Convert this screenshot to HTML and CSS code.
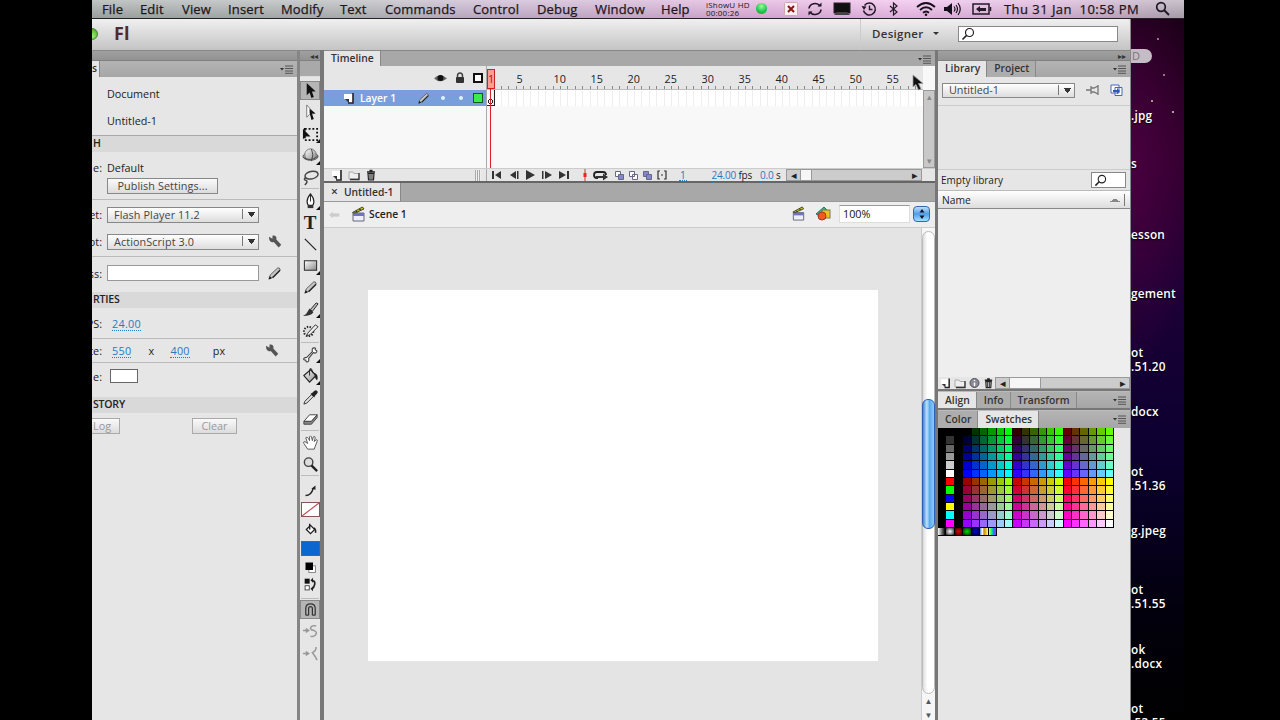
FILE: index.html
```
<!DOCTYPE html>
<html>
<head>
    <meta charset="utf-8">
    <title>Flash</title>
    <link rel="stylesheet" href="styles.css">
</head>
<body>
    <svg class="defs" width="0" height="0">
        <defs>
            <linearGradient id="metal" x1="0" y1="0" x2="1" y2="1"><stop offset="0" stop-color="#fff"/><stop offset="1" stop-color="#888"/></linearGradient>
            <symbol id="menu" viewBox="0 0 13 9"><path d="M0 3h4L2 5.5z" fill="#333"/><path d="M5 1h8M5 3.5h8M5 6h8M5 8.3h8" stroke="#555" stroke-width="1"/></symbol>
            <symbol id="lens" viewBox="0 0 14 14"><circle cx="8.5" cy="5.5" r="4" fill="none" stroke="#222" stroke-width="1.2"/><path d="M5.6 8.4L1.5 12.5" stroke="#222" stroke-width="1.6"/></symbol>
            <symbol id="wrench" viewBox="0 0 14 14"><path d="M2 2.5l3 2 .2-3C8 1 9.500 3 8.700 5.200l4.600 4.900-2.400 2.400L6.300 7.500C3.800 8.300 1.500 6 2 2.500z" fill="#555"/></symbol>
            <symbol id="pencil" viewBox="0 0 16 16"><path d="M2 14l1.500-4.500 8-7.500q2-.5 2.500 2l-8 8z" fill="url(#metal)" stroke="#555"/><path d="M2 14l1-3 2 2z" fill="#111"/><path d="M6 12.500l8-8" stroke="#222" stroke-width="1.300"/></symbol>
            <symbol id="page" viewBox="0 0 12 12"><path d="M1 2h9v9H6V7H1z" fill="#fff"/><path d="M10 1v10H5" fill="none" stroke="#222" stroke-width="1.600"/><path d="M2 7l4 4V7z" fill="#333"/></symbol>
            <symbol id="folder" viewBox="0 0 12 12"><path d="M1 3h4l1 1.500h5V10H1z" fill="#eee" stroke="#aaa"/><path d="M11 4v6.500H2" fill="none" stroke="#333" stroke-width="1.300"/></symbol>
            <symbol id="trash" viewBox="0 0 12 12"><path d="M2 3h8M4.500 1.500h3" stroke="#222" stroke-width="1.400"/><path d="M3 4.500h6L8.500 11h-5z" fill="#ccc" stroke="#222" stroke-width="1.200"/><path d="M5 5v6M7 5v6" stroke="#333"/></symbol>
            <symbol id="scene" viewBox="0 0 15 16"><path d="M2 7h11v8H2z" fill="#eef" stroke="#667"/><path d="M2 7h11v3H2z" fill="#7074b8"/><path d="M1.500 6.500L11.500 1l1.500 2-9 4z" fill="#c8c020" stroke="#443"/><path d="M4.500 5l2 1M8 3l2 1" stroke="#332"/></symbol>
        </defs>
    </svg>

    <div class="screen">
        <div class="menubar">
            <span>File</span><span>Edit</span><span>View</span><span>Insert</span><span>Modify</span><span>Text</span><span>Commands</span><span>Control</span><span>Debug</span><span>Window</span><span>Help</span>
            <div class="rec"><p>iShowU HD</p><p>00:00:26</p></div>
            <i class="led"></i>
            <svg width="14" height="14"><rect x=".5" y=".5" width="13" height="13" rx="1" fill="#f8eef4" stroke="#caa"/><path d="M4 4l6 6M10 4l-6 6" stroke="#8c1515" stroke-width="2"/></svg>
            <svg width="16" height="16"><path d="M2 7.500a6 5.500 0 0 1 11-2.500M14 8.500a6 5.500 0 0 1-11 2.500" fill="none" stroke="#201525" stroke-width="1.600"/><path d="M10.500 5.500h4V1.500zM5.500 10.500h-4v4z" fill="#201525"/></svg>
            <svg width="18" height="14"><rect x="1" y="1" width="16" height="10" fill="#111" stroke="#302030"/><path d="M1 13l3-3h10l3 3z" fill="#444"/></svg>
            <svg width="16" height="16"><path d="M3.500 4.500a6 6 0 1 1-1 5" fill="none" stroke="#241a28" stroke-width="1.500"/><path d="M.5 5l5 .5L3 9z" fill="#241a28"/><path d="M8.500 4.500V8.500h3" fill="none" stroke="#241a28" stroke-width="1.400"/></svg>
            <svg width="12" height="16"><path d="M2 5l7 6-3.500 3V2L9 5l-7 6" fill="none" stroke="#241a28" stroke-width="1.200"/></svg>
            <svg width="20" height="16"><path d="M1 6q9-8 18 0M4 9q6-5.500 12 0M7 11.700q3-2.500 6 0" fill="none" stroke="#16101a" stroke-width="1.900"/><circle cx="10" cy="13.700" r="1.300" fill="#16101a"/></svg>
            <svg width="17" height="16"><path d="M0 6h3l5-4v12l-5-4H0z" fill="#16101a"/><path d="M10 5.500q2 2.500 0 5M12 4q3 4 0 8M14 2q4.500 6 0 12" fill="none" stroke="#16101a" stroke-width="1.200"/></svg>
            <svg width="20" height="14"><rect x="1" y="2" width="16" height="10" fill="none" stroke="#241a28" stroke-width="1.500"/><path d="M18.500 5v4" stroke="#241a28" stroke-width="1.500"/><path d="M4 7l4-3v2h6v3H8v1.500z" fill="#241a28"/></svg>
            <span class="clock">Thu 31 Jan &nbsp;10:58 PM</span>
            <svg width="15" height="15"><circle cx="6" cy="6" r="4.300" fill="none" stroke="#201825" stroke-width="1.700"/><path d="M9 9l5 5" stroke="#201825" stroke-width="2"/></svg>
        </div>

        <div class="desk">
            <div class="app">
                <div class="titlebar">
                    <i class="zoom-light"></i>
                    <span class="fl">Fl</span>
                    <div class="workspace">Designer <i class="tri"></i></div>
                    <div class="search"><svg width="14" height="14"><use href="#lens"/></svg></div>
                </div>

                <div class="work">
                    <div class="props">
                        <div class="strip"></div>
                        <div class="tabs"><span class="tab stub">s</span><svg class="pm" width="13" height="9"><use href="#menu"/></svg></div>
                        <div class="doc"><p>Document</p><p>Untitled-1</p></div>
                        <h3>H</h3>
                        <div class="row r-profile"><label>e:</label><span>Default</span></div>
                        <div class="row r-publish"><label></label><button>Publish Settings...</button></div>
                        <div class="row r-target"><label>et:</label><div class="select">Flash Player 11.2<i></i></div></div>
                        <div class="row r-script"><label>ot:</label><div class="select">ActionScript 3.0<i></i></div><svg width="15" height="15"><use href="#wrench"/></svg></div>
                        <div class="row r-class"><label>ss:</label><div class="field"></div><svg width="15" height="15"><use href="#pencil"/></svg></div>
                        <h3>RTIES</h3>
                        <div class="row r-fps"><label>PS:</label><a>24.00</a></div>
                        <div class="row r-size"><label>te:</label><a>550</a><b>x</b><a>400</a><b>px</b><svg width="15" height="15"><use href="#wrench"/></svg></div>
                        <div class="row r-stage"><label>e:</label><div class="chip"></div></div>
                        <h3>STORY</h3>
                        <div class="row r-log"><button>Log</button><button>Clear</button></div>
                    </div>

                    <div class="tools">
                        <div class="strip">◂◂</div>
                        <div class="grip"></div>
                        <div class="tool on"><svg viewBox="0 0 18 18"><path d="M5 1v13l3-3 2 6 2.500-1-2-6h4z" fill="#111"/></svg></div>
                        <div class="tool"><svg viewBox="0 0 18 18"><path d="M5 1v13l3-3 5-1z" fill="#fff" stroke="#777"/><path d="M8 9l2 8 2.500-1-2-6h4L8 5z" fill="#111"/></svg></div>
                        <div class="tool more"><svg viewBox="0 0 18 18"><rect x="3" y="3" width="13" height="12" fill="none" stroke="#111" stroke-width="2" stroke-dasharray="2 2"/><path d="M1 3v11l3-3h5z" fill="#111"/></svg></div>
                        <div class="tool more"><svg viewBox="0 0 18 18"><ellipse cx="9" cy="10" rx="8" ry="4" fill="#aaa" stroke="#555"/><circle cx="9" cy="8" r="6" fill="url(#metal)" stroke="#777"/><path d="M1.500 11q7 5 15-1M10 2q3 6 0 13" fill="none" stroke="#444"/></svg></div>
                        <div class="tool"><svg viewBox="0 0 18 18"><ellipse cx="10" cy="6.500" rx="7" ry="4" fill="none" stroke="#444" stroke-width="1.500" transform="rotate(-12 10 6)"/><path d="M4 9q-3 2 0 3t-1 5" fill="none" stroke="#444" stroke-width="1.600"/></svg></div>
                        <hr>
                        <div class="tool more"><svg viewBox="0 0 18 18"><path d="M9 1q5 6 3 11l-1 1H7l-1-1Q4 7 9 1z" fill="#fff" stroke="#222" stroke-width="1.300"/><path d="M9 2v7" stroke="#222"/><rect x="6" y="13" width="6" height="3" fill="#333"/></svg></div>
                        <div class="tool"><span class="tee">T</span></div>
                        <div class="tool"><svg viewBox="0 0 18 18"><path d="M3 3l12 12" stroke="#222" stroke-width="1.300"/></svg></div>
                        <div class="tool more"><svg viewBox="0 0 18 18"><rect x="2.500" y="4" width="13" height="10" fill="url(#metal)" stroke="#222"/></svg></div>
                        <div class="tool"><svg viewBox="0 0 18 18"><use href="#pencil" x="1" y="1" width="16" height="16"/></svg></div>
                        <div class="tool more"><svg viewBox="0 0 18 18"><path d="M9 9l6-7 2 1-6 8z" fill="#bbb" stroke="#222"/><path d="M8 8l4 4q-2 4-11 4 4-2 5-5z" fill="#333"/></svg></div>
                        <div class="tool"><svg viewBox="0 0 18 18"><circle cx="7" cy="10" r="5" fill="#ddd" stroke="#222" stroke-width="2" stroke-dasharray="1.500 1.500"/><path d="M6 12l8-9 3 2-8 8-4 2z" fill="#eee" stroke="#333"/></svg></div>
                        <hr>
                        <div class="tool more"><svg viewBox="0 0 18 18"><path d="M5 12l6-6q-1-4 2-4 2 0 1 2 3 1 1 3-1 1-3 0l-5 6q1 4-2 4-1-1-1-2-3 0-2-2 1-1 3-1z" fill="#fff" stroke="#444" stroke-width="1.200"/></svg></div>
                        <div class="tool more"><svg viewBox="0 0 18 18"><path d="M2 9l7-6 6 6-7 7z" fill="url(#metal)" stroke="#222" stroke-width="1.200"/><path d="M8 9V3q0-2 2-1l2 5" fill="none" stroke="#222"/><path d="M13 6q5 2 3 8-3-2-3-8z" fill="#222"/></svg></div>
                        <div class="tool"><svg viewBox="0 0 18 18"><path d="M2 16l1-3 7-7 2 2-7 7z" fill="#ddd" stroke="#333"/><path d="M9 5l4 4 1-2q4-4 2-5-2-2-5 2z" fill="#222"/></svg></div>
                        <div class="tool"><svg viewBox="0 0 18 18"><path d="M2 11l6-7h8l-6 7z" fill="#fff" stroke="#444"/><path d="M2 11h8l6-7v3l-6 7H2z" fill="#888" stroke="#444"/></svg></div>
                        <hr>
                        <div class="tool"><svg viewBox="0 0 18 18"><path d="M6 16l-4-6q-1-2 1-2l3 2-2-6q1-2 3 1l1 2V3q1-2 2 0l1 4 1-4q2-1 2 1l-1 4 2-2q2 0 1 2l-2 5-1 3z" fill="#fff" stroke="#555"/></svg></div>
                        <div class="tool"><svg viewBox="0 0 18 18"><circle cx="7" cy="6.500" r="4.500" fill="#ddd" stroke="#444" stroke-width="1.500"/><path d="M10 10l6 6" stroke="#222" stroke-width="2.500"/></svg></div>
                        <hr>
                        <div class="tool sm"><svg viewBox="0 0 18 18"><path d="M3 15q7 0 9-8" fill="none" stroke="#222" stroke-width="1.800"/><path d="M10 7l5-4v5z" fill="#222"/></svg></div>
                        <div class="color none"><svg width="17" height="13"><path d="M0 13L17 0" stroke="#c0505a" stroke-width="1.200"/></svg></div>
                        <div class="tool bucket"><svg viewBox="0 0 18 18"><path d="M4 9l5-5 5 5-5 5z" fill="#fff" stroke="#222" stroke-width="1.500"/><path d="M8 9V2M13 7q3 2 2 6" fill="none" stroke="#222" stroke-width="1.700"/></svg></div>
                        <div class="color fill"></div>
                        <div class="tool bw"><svg viewBox="0 0 18 18"><rect x="7" y="7" width="8" height="8" fill="#fff" stroke="#777"/><rect x="3" y="3" width="9" height="9" fill="#000"/></svg></div>
                        <div class="tool swap"><svg viewBox="0 0 18 18"><rect x="2" y="2" width="6" height="6" fill="#111"/><rect x="2.500" y="10.500" width="5" height="5" fill="#fff" stroke="#333"/><path d="M11 4q4 1 3 5t-3 5" fill="none" stroke="#222" stroke-width="2"/><path d="M12 1v6L9 4zM12 11v6l-3-3z" fill="#222"/></svg></div>
                        <hr>
                        <div class="tool on"><svg viewBox="0 0 18 18"><path d="M4 15V8q0-5 5-5t5 5v7M7 15V8q0-2 2-2t2 2v7M4 15h3M11 15h3" fill="none" stroke="#333" stroke-width="1.300"/></svg></div>
                        <div class="tool"><svg viewBox="0 0 18 18"><path d="M1 8h5M4 6l3 2-3 2M15 3q-6-1-6 3 1 2 4 2 4 2 1 5-2 2-5 1" fill="none" stroke="#999" stroke-width="1.600"/></svg></div>
                        <div class="tool"><svg viewBox="0 0 18 18"><path d="M1 9h5M4 7l3 2-3 2M15 2q0 4-4 6 3 4 5 8" fill="none" stroke="#999" stroke-width="1.600"/></svg></div>
                    </div>

                    <div class="center">
                        <div class="tabs"><span class="tab">Timeline</span><svg class="pm" width="13" height="9"><use href="#menu"/></svg></div>
                        <div class="timeline">
                            <div class="layers">
                                <div class="layer-head">
                                    <svg width="13" height="11"><path d="M0 5.500Q6-1 13 5.500 6 11 0 5.500z" fill="#666"/><circle cx="6.500" cy="5" r="3" fill="#111"/></svg>
                                    <svg width="10" height="12"><path d="M2.500 6V4q0-3 2.500-3t2.500 3v2" fill="none" stroke="#444" stroke-width="1.500"/><rect x="1" y="5" width="8" height="6" rx="1" fill="#333"/></svg>
                                    <i class="box"></i>
                                </div>
                                <div class="layer">
                                    <svg width="12" height="12"><use href="#page"/></svg>
                                    <span>Layer 1</span>
                                    <svg width="13" height="13"><use href="#pencil"/></svg>
                                    <i class="dot"></i><i class="dot"></i><i class="box green"></i>
                                </div>
                            </div>
                            <div class="frames">
                                <div class="ruler"><span>1</span><span>5</span><span>10</span><span>15</span><span>20</span><span>25</span><span>30</span><span>35</span><span>40</span><span>45</span><span>50</span><span>55</span></div>
                                <div class="track"><i class="key"></i></div>
                                <i class="playhead"></i>
                            </div>
                            <div class="vbar"><span>▴</span><span>▾</span></div>
                        </div>
                        <div class="controls">
                            <div class="layer-tools"><svg width="12" height="12"><use href="#page"/></svg><svg width="12" height="12"><use href="#folder"/></svg><svg width="12" height="12"><use href="#trash"/></svg><i class="ridges"></i></div>
                            <svg width="180" height="12" fill="#333">
                                <path d="M1 2h2v8H1zM10 2v8L4 6z"/><path d="M25 2v8l-6-4zM26 2h1.500v8H26z"/><path d="M35 1v10l9-5z"/><path d="M51 2h1.500v8H51zM54 2v8l7-4z"/><path d="M68 2v8l7-4zM76 2h2v8h-2z"/>
                                <path d="M94 0v12" stroke="#d33"/><path d="M92.500 4h3v4h-3z" fill="#e22"/>
                                <path d="M107 9h-1q-3 0-3-3t3-3h6q3 0 3 3" fill="none" stroke="#222" stroke-width="1.800"/><path d="M105 7h7V4.500l5 3.500-5 3.500V9h-7z"/>
                                <g stroke="#668"><path d="M124.500 2.500h5v5h-5z" fill="#fff"/><path d="M127.500 5.500h5v5h-5z" fill="#8585d0"/><path d="M138.500 2.500h5v5h-5zM141.500 5.500h5v5h-5z" fill="#fff"/><path d="M152.500 2.500h5v5h-5z" fill="#8585d0"/><path d="M155.500 5.500h5v5h-5z" fill="#8585d0"/></g>
                                <path d="M169 2h-2v8h2M173 2h2v8h-2M170 6h2" fill="none" stroke="#333" stroke-width="1.200"/>
                            </svg>
                            <div class="stats"><a>1</a><span><a>24.00</a> fps</span><span><a>0.0</a> s</span></div>
                            <div class="hbar"><span>◂</span><i></i><span>▸</span></div>
                        </div>
                        <div class="tabs doc-tabs"><span class="tab"><small>×</small>Untitled-1</span></div>
                        <div class="scenebar">
                            <span class="back">⬅</span>
                            <svg width="15" height="16"><use href="#scene"/></svg>
                            <span class="name">Scene 1</span>
                            <svg width="15" height="15"><use href="#scene"/></svg>
                            <svg width="16" height="15"><path d="M1 8l8-7 3 3v5H3z" fill="#4a9" stroke="#275"/><rect x="7" y="4" width="8" height="8" fill="#ecc51c" stroke="#775"/><circle cx="7" cy="10" r="4" fill="#ee5a20" stroke="#a32"/></svg>
                            <div class="zoom">100%</div>
                            <div class="stepper"><svg width="8" height="12"><path d="M4 1l2.500 3.500h-5zM4 11l2.500-3.500h-5z" fill="#113"/></svg></div>
                        </div>
                        <div class="pasteboard">
                            <div class="stage"></div>
                            <div class="aqua">
                                <div class="well"><div class="thumb"></div></div>
                                <span>▲</span><span>▼</span>
                            </div>
                        </div>
                    </div>

                    <div class="right">
                        <div class="strip">▸▸</div>
                        <div class="tabs"><span class="tab">Library</span><span class="tab off">Project</span><svg class="pm" width="13" height="9"><use href="#menu"/></svg></div>
                        <div class="lib-pick">
                            <div class="select">Untitled-1<i></i></div>
                            <svg width="13" height="12"><path d="M0 6h5M5 2v8M12 1v10M5 4h3l4-2M5 8h3l4 2" fill="none" stroke="#777" stroke-width="1.300"/></svg>
                            <svg width="13" height="12"><path d="M1 1h8v8H1zM5 3.500h7v8H5z" fill="#fff" stroke="#46b"/><path d="M3 6h4V4l3 3-3 3V8H3z" fill="#35b"/></svg>
                        </div>
                        <div class="preview"></div>
                        <div class="lib-info">Empty library<div class="mini"><svg width="13" height="13"><use href="#lens"/></svg></div></div>
                        <div class="lib-head">Name<i></i></div>
                        <div class="lib-list"></div>
                        <div class="lib-foot">
                            <svg width="11" height="12"><use href="#page"/></svg><svg width="12" height="12"><use href="#folder"/></svg><svg width="11" height="12"><circle cx="5.500" cy="6" r="4.500" fill="#889" stroke="#555"/><path d="M5.500 3v1M5.500 5.500V9" stroke="#fff" stroke-width="1.500"/></svg><svg width="11" height="12"><use href="#trash"/></svg>
                            <div class="hbar"><span>◂</span><i></i><span>▸</span></div>
                        </div>
                        <div class="tabs low"><span class="tab">Align</span><span class="tab off">Info</span><span class="tab off">Transform</span><svg class="pm" width="13" height="9"><use href="#menu"/></svg></div>
                        <div class="tabs low"><span class="tab off">Color</span><span class="tab">Swatches</span><svg class="pm" width="13" height="9"><use href="#menu"/></svg></div>
                        <div class="swatches" id="swatches"></div>
                        <div class="gradients"><i></i><i></i><i></i><i></i><i></i><i></i><i></i></div>
                    </div>
                </div>
            </div>

            <div class="desktop">
                <span class="pill">D</span>
                <p class="first">.jpg</p>
                <p class="short">s</p>
                <p>esson</p>
                <p>gement</p>
                <p>ot<br>.51.20</p>
                <p>docx</p>
                <p>ot<br>.51.36</p>
                <p>g.jpeg</p>
                <p>ot<br>.51.55</p>
                <p>ok<br>.docx</p>
                <p>ot<br>.53.55</p>
            </div>
        </div>
    </div>

    <svg class="cursor" width="12" height="18"><path d="M1 1v12l3-2.500L6.500 16 9 15 6.500 9.500H11z" fill="#111" stroke="#999" stroke-width=".8"/></svg>

    <script>
        // web safe palette: 3 fixed columns, then 3 blocks of 6x6 in each half
        const box = document.getElementById('swatches');
        const grays = ['#000', '#333', '#666', '#999', '#ccc', '#fff', '#f00', '#0f0', '#00f', '#ff0', '#0ff', '#f0f'];

        function addSwatch(color) {
            const cell = document.createElement('i');
            cell.style.background = color;
            box.appendChild(cell);
        }

        for (let row = 0; row < 12; row++) {
            addSwatch('#000');
            addSwatch(grays[row]);
            addSwatch('#000');
            for (let col = 0; col < 18; col++) {
                const r = (Math.floor(col / 6) + (row > 5 ? 3 : 0)) * 51;
                const g = (col % 6) * 51;
                const b = (row % 6) * 51;
                addSwatch('rgb(' + r + ',' + g + ',' + b + ')');
            }
        }
    </script>
</body>
</html>
```
FILE: styles.css
```
* {
    margin: 0;
    padding: 0;
    box-sizing: border-box;
}

body {
    width: 1280px;
    height: 720px;
    background: #000;
    overflow: hidden;
    font-family: 'Open Sans', 'Noto Sans', sans-serif;
    font-size: 10.8px;
    color: #222;
}

svg {
    display: block;
    flex: none;
}

i {
    display: block;
    flex: none;
}

.defs {
    position: absolute;
}

.screen {
    width: 1092px;
    height: 720px;
    margin-left: 92px;
    display: flex;
    flex-direction: column;
    overflow: hidden;
}

/* menu bar */
.menubar {
    height: 19px;
    flex: none;
    display: grid;
    grid-template-columns: 38px 42px 46px 53px 59px 45px 88px 64px 58px 66px 45px 51px 27px 23px 26px 28px 27px 28px 28px 28px 32px 151px 20px;
    align-items: center;
    padding-left: 10px;
    padding-bottom: 2px;
    border-bottom: 1px solid #222;
    background: linear-gradient(rgba(255, 255, 255, 0.3), rgba(0, 0, 0, 0.08)), linear-gradient(90deg, #a5acaa, #b6b8bb 25%, #c9b5d0 36%, #d0b2d2 48%, #e3b0de 62%, #f0bdec 75%, #dcb4da 88%, #b3a8b6);
    color: #1c1620;
}

.menubar span {
    font-size: 13px;
    line-height: 16px;
    white-space: nowrap;
    letter-spacing: 0.15px;
    -webkit-text-stroke: 0.25px #1c1620;
}

.menubar .clock {
    letter-spacing: 0.45px;
}

.rec {
    padding-top: 1px;
    font-size: 8px;
    line-height: 8px;
    white-space: nowrap;
    letter-spacing: 0.2px;
}

.led {
    width: 11px;
    height: 11px;
    margin-left: -1px;
    border-radius: 50%;
    background: radial-gradient(circle at 50% 30%, #9f9, #1cc24a 60%, #2a9a4a);
}

.desk {
    flex: 1;
    display: flex;
    min-height: 0;
}

.app {
    width: 1039px;
    flex: none;
    display: flex;
    flex-direction: column;
    border-right: 1px solid #888;
    background: #e6e6e6;
}

.titlebar {
    height: 31px;
    flex: none;
    display: flex;
    align-items: center;
    overflow: hidden;
    border-top-right-radius: 5px;
    background: linear-gradient(#f0f0f0, #c4c4c4);
}

.zoom-light {
    width: 12px;
    height: 12px;
    margin-left: -6px;
    margin-top: -2px;
    border-radius: 50%;
    background: radial-gradient(circle at 50% 70%, #a6ee70, #3aa428);
    border: 1px solid #4b7c38;
}

.fl {
    margin-left: 16px;
    margin-top: -4px;
    font-size: 18px;
    font-weight: 700;
    color: #54292a;
    line-height: 24px;
}

.workspace {
    margin-left: auto;
    width: 98px;
    height: 31px;
    padding: 0 0 2px 11px;
    display: flex;
    align-items: center;
    border-left: 1px solid #ccc;
    font-size: 11.5px;
    font-weight: 600;
    letter-spacing: 0.3px;
    color: #333;
}

.tri {
    margin-left: 9px;
    border: 3px solid transparent;
    border-top-color: #333;
    border-bottom: 0;
}

.search {
    width: 160px;
    height: 16px;
    margin-right: 12px;
    margin-top: -2px;
    padding: 0 2px;
    background: #fff;
    border: 1px solid #888;
}

.work {
    flex: 1;
    display: flex;
    min-height: 0;
}

/* shared panel parts */
.strip {
    height: 11px;
    flex: none;
    padding-right: 4px;
    border-top: 1px solid #888;
    border-bottom: 1px solid #808080;
    background: linear-gradient(#a0a0a0, #929292);
    text-align: right;
    font-size: 8px;
    line-height: 9px;
    color: #333;
}

.tabs {
    height: 16px;
    flex: none;
    display: flex;
    background: linear-gradient(#b4b4b4, #a6a6a6);
}

.tab {
    padding: 0 6px 0 7px;
    line-height: 15px;
    font-weight: 600;
    font-size: 10.3px;
    border-right: 1px solid #888;
    background: #e6e6e6;
    color: #333;
}

.tab.off {
    background: #adadad;
    border-right-color: #8a8a8a;
}

.pm {
    margin: 4px 4px 0 auto;
}

.select {
    display: flex;
    align-items: center;
    height: 16px;
    padding-left: 6px;
    padding-bottom: 1px;
    border: 1px solid #888;
    background: linear-gradient(#fff, #ddd);
    color: #444;
    white-space: nowrap;
}

.select i {
    width: 16px;
    height: 10px;
    margin-left: auto;
    border-left: 1px solid #777;
    background: linear-gradient(#333, #333) 5px 3px / 7px 1px no-repeat, linear-gradient(#333, #333) 6px 4px / 5px 2px no-repeat, linear-gradient(#333, #333) 7px 6px / 3px 1px no-repeat, linear-gradient(#333, #333) 8px 7px / 1px 1px no-repeat;
}

button {
    font: inherit;
    border: 1px solid #888;
    background: linear-gradient(#fafafa, #dcdcdc);
    color: #444;
}

a {
    color: #2a7ab8;
    border-bottom: 1px dotted #2a7ab8;
    line-height: 13px;
}

/* properties panel */
.props {
    width: 205px;
    flex: none;
    overflow: hidden;
}

.stub {
    width: 8px;
    padding: 0;
    overflow: hidden;
}

.doc {
    height: 59px;
    padding: 8px 0 0 15px;
    border-bottom: 1px solid #aaa;
}

.doc p {
    height: 27px;
    line-height: 18px;
}

.props h3 {
    height: 16px;
    padding-left: 1px;
    overflow: hidden;
    line-height: 15px;
    font-size: 10.5px;
    font-weight: 600;
    letter-spacing: -0.2px;
    background: #d9d9d9;
}

.row {
    display: flex;
    align-items: center;
}

.row label {
    width: 10px;
    margin-right: 5px;
    display: flex;
    flex: none;
    justify-content: flex-end;
    overflow: hidden;
    white-space: nowrap;
}

.row .select,
.row .field {
    width: 152px;
}

.row svg {
    margin-left: 8px;
}

.r-profile {
    height: 25px;
    padding-top: 6px;
}

.r-publish {
    height: 23px;
    padding-bottom: 5px;
    border-bottom: 1px solid #bbb;
}

.r-publish button {
    width: 111px;
    height: 16px;
    line-height: 13px;
}

.r-target {
    height: 26px;
    padding-top: 3px;
    margin-bottom: 1px;
}

.r-target .select,
.r-script .select,
.r-publish button {
    letter-spacing: 0.1px;
}

.r-script {
    height: 30px;
    border-bottom: 1px solid #bbb;
}

.r-class {
    height: 35px;
    padding-bottom: 3px;
}

.field {
    height: 16px;
    border: 1px solid #999;
    background: #fff;
}

.r-fps {
    height: 31px;
    padding-top: 1px;
    border-bottom: 1px solid #bbb;
}

.r-fps a,
.r-size label + a {
    margin-left: 5px;
}

.r-fps a,
.r-size a {
    letter-spacing: 0.3px;
}

.r-size {
    height: 24px;
    border-bottom: 1px solid #bbb;
}

.r-size b {
    width: 58px;
    padding-left: 23px;
    font-weight: normal;
}

.r-size b:nth-of-type(1) {
    width: 39px;
    padding-left: 17px;
}

.r-size svg {
    margin-left: 16px;
}

.r-stage {
    height: 34px;
    padding-bottom: 8px;
}

.chip {
    width: 28px;
    height: 14px;
    margin-left: 3px;
    border: 1px solid #666;
    background: #fff;
}

.r-log {
    height: 25px;
    gap: 72px;
}

.r-log button {
    width: 28px;
    height: 16px;
    line-height: 13px;
    border-color: #aaa;
    color: #999;
}

.r-log button:first-child {
    padding-right: 7px;
    border-left: 0;
}

.r-log button:last-child {
    width: 45px;
}

/* tool column */
.tools {
    width: 26px;
    flex: none;
    border-left: 3px solid #858585;
    border-right: 3px solid #777;
}

.tools .strip {
    padding-right: 2px;
}

.grip {
    height: 16px;
    margin-bottom: 4px;
    background: #a9a9a9;
    border-bottom: 1px solid #ddd;
}

.tool {
    height: 21.6px;
    display: flex;
    align-items: center;
    justify-content: center;
    position: relative;
}

.tool svg {
    width: 17px;
    height: 17px;
}

.tool.on {
    height: 19px;
    margin-bottom: 2px;
    margin-top: 1px;
    background: #b5b5b5;
    border: 1px solid #888;
}

.tool.more::after {
    content: '';
    position: absolute;
    right: 0;
    bottom: 2px;
    border: 2px solid #111;
    border-left-color: transparent;
    border-top-color: transparent;
}

.tools hr {
    border: 0;
    border-top: 1px solid #bbb;
    margin: 0 1px 1px;
}

.tee {
    font-family: 'Liberation Serif', serif;
    font-weight: bold;
    font-size: 19px;
    line-height: 20px;
}

.color {
    width: 19px;
    height: 15px;
    margin: 0 auto;
    border: 1px solid #555;
}

.none {
    background: #fff;
    border-color: #855;
}

.fill {
    background: #0a66d0;
    border-color: #468;
}

.tool.sm {
    height: 25px;
    padding-top: 1px;
}

.tool.bucket {
    height: 24px;
}

.tool.bw {
    height: 22px;
}

.tool.swap {
    height: 13px;
    margin-bottom: 7px;
}

.tool.bw svg,
.tool.swap svg,
.tool.sm svg,
.tool.bucket svg {
    width: 15px;
    height: 15px;
}

/* timeline */
.center {
    width: 615px;
    flex: none;
    display: flex;
    flex-direction: column;
    border-left: 1px solid #777;
    border-right: 3px solid #777;
}

.center > .tabs {
    height: 16px;
    border-top: 1px solid #888;
    background: #a8a8a8;
}

.timeline {
    height: 102px;
    flex: none;
    display: flex;
    background: #f8f8f8;
}

.layers {
    width: 163px;
    flex: none;
    border-right: 1px solid #aaa;
}

.layer-head {
    height: 24px;
    display: flex;
    align-items: center;
    justify-content: flex-end;
    gap: 8px;
    padding-right: 3px;
    background: #e6e6e6;
}

.box {
    width: 10px;
    height: 10px;
    border: 2px solid #111;
    background: #fff;
}

.box.green {
    border: 1px solid #175a20;
    background: #3bea4b;
}

.layer {
    height: 16px;
    display: flex;
    align-items: center;
    padding: 0 3px 0 19px;
    background: #789fdc;
    color: #fff;
    font-weight: 600;
}

.layer span {
    width: 66px;
    padding-left: 5px;
    padding-bottom: 1px;
    font-size: 10.3px;
}

.layer .dot {
    width: 4px;
    height: 4px;
    margin-left: 4px;
    margin-right: 10px;
    border-radius: 50%;
    background: #dff4ff;
}

.layer .dot:nth-of-type(1) {
    margin-left: 11px;
}

.layer svg:nth-of-type(2) {
    margin-left: -3px;
}

.layer .box {
    margin-left: auto;
}

.frames {
    width: 436px;
    overflow: hidden;
    position: relative;
}

.ruler {
    height: 24px;
    display: flex;
    background: repeating-linear-gradient(90deg, transparent 0 6.4px, #888 6.4px 7.4px) 0 20px / 100% 3px no-repeat, #e6e6e6;
    border-bottom: 1px solid #bbb;
}

.ruler span {
    width: 37px;
    flex: none;
    padding-top: 5px;
    line-height: 16px;
    position: relative;
    z-index: 1;
}

.ruler span:first-child {
    width: 29.6px;
    padding-left: 1px;
    color: #a11;
}

.track {
    height: 16px;
    background: repeating-linear-gradient(90deg, #fff 0 6.4px, #eee 6.4px 7.4px);
}

.key {
    width: 8px;
    height: 16px;
    background: radial-gradient(circle at 3.500px 11.500px, transparent 1.5px, #222 1.6px 2.4px, transparent 2.7px);
    border: 1px solid #222;
    border-left: 0;
    border-top: 0;
}

.playhead {
    position: absolute;
    left: 0;
    top: 3px;
    width: 8px;
    height: 20px;
    border: 1px solid #c22;
    background: #ff9c98;
}

.playhead::after {
    content: '';
    position: absolute;
    left: 2px;
    top: 19px;
    width: 1px;
    height: 80px;
    background: #d22;
}

.vbar {
    width: 12px;
    margin-top: 24px;
    display: flex;
    flex-direction: column;
    justify-content: space-between;
    border: 1px solid #999;
    background: #c8c8c8;
    text-align: center;
    font-size: 9px;
    line-height: 12px;
    color: #888;
}

.controls {
    height: 15px;
    flex: none;
    display: flex;
    align-items: center;
    border-bottom: 2px solid #666;
    border-top: 1px solid #ccc;
    background: #e6e6e6;
}

.layer-tools {
    width: 163px;
    height: 12px;
    padding-left: 7px;
    display: flex;
    gap: 5px;
    border-right: 1px solid #aaa;
}

.ridges {
    width: 6px;
    margin: 1px 5px 0 auto;
    background: repeating-linear-gradient(90deg, #aaa 0 1px, #eee 1px 2px);
}

.controls > svg {
    margin-left: 4px;
}

.stats {
    width: 115px;
    display: flex;
    align-items: center;
    padding-left: 8px;
    font-size: 10px;
    letter-spacing: -0.2px;
    white-space: nowrap;
}

.stats a {
    line-height: 10px;
}

.stats > a {
    margin-right: 25px;
    padding: 0 1px;
}

.stats span + span {
    margin-left: 8px;
}

.hbar {
    flex: 1;
    height: 12px;
    margin-right: 13px;
    display: flex;
    border: 1px solid #999;
    background: #ccc;
    font-size: 11px;
    line-height: 10px;
}

.hbar span {
    width: 13px;
    text-align: center;
    overflow: hidden;
}

.hbar span:last-child {
    margin-left: auto;
}

.hbar i {
    width: 12px;
    background: #f6f6f6;
    border: solid #999;
    border-width: 0 1px;
}

/* document */
.center > .doc-tabs {
    height: 19px;
    border-top: 0;
    border-bottom: 1px solid #999;
}

.doc-tabs .tab {
    line-height: 18px;
}

.doc-tabs small {
    font-size: 12px;
    margin-right: 6px;
}

.scenebar {
    height: 26px;
    flex: none;
    display: flex;
    align-items: center;
    padding: 0 0 2px 5px;
    background: #eee;
    border-bottom: 1px solid #ccc;
}

.back {
    width: 22px;
    font-size: 13px;
    color: #ccc;
}

.scenebar .name {
    margin-left: 3px;
    margin-right: auto;
    font-size: 10.3px;
    font-weight: 600;
}

.scenebar .name + svg + svg {
    margin: 0 8px 0 9px;
}

.zoom {
    width: 71px;
    height: 18px;
    padding-left: 3px;
    line-height: 16px;
    background: #fff;
    border: 1px solid #ddd;
    border-top-color: #999;
    color: #111;
}

.stepper {
    width: 17px;
    height: 16px;
    margin: 0 5px 0 3px;
    display: flex;
    align-items: center;
    justify-content: center;
    border: 1px solid #36a;
    border-radius: 4px;
    background: linear-gradient(#bde0fa, #4f9de4 50%, #a2e2ff);
}

.pasteboard {
    flex: 1;
    display: flex;
    justify-content: space-between;
    background: #e4e4e4;
}

.stage {
    width: 510px;
    height: 371px;
    margin: 62px 0 0 44px;
    background: #fff;
}

.aqua {
    width: 14px;
    padding-top: 3px;
    display: flex;
    flex-direction: column;
    background: #f6f6f6;
    border-left: 1px solid #ccc;
    text-align: center;
    font-size: 8px;
    line-height: 14px;
    color: #555;
}

.well {
    height: 463px;
    padding-top: 167px;
    border: 1px solid #bbb;
    border-radius: 7px;
    background: linear-gradient(90deg, #ddd, #fff 40%);
}

.thumb {
    height: 130px;
    margin: 0 -1px;
    border: 1px solid #2c5fb4;
    border-radius: 6px;
    background: linear-gradient(90deg, #3f86d8, #bfe2fc 35%, #58aaf0 60%, #90ccf8);
}

/* library side */
.right {
    flex: 1;
    background: #e6e6e6;
}

.lib-pick {
    height: 29px;
    display: flex;
    align-items: center;
    gap: 11px;
    padding: 0 0 2px 4px;
    border-bottom: 1px solid #ccc;
}

.lib-pick .select {
    width: 133px;
    height: 15px;
}

.preview {
    height: 64px;
    border-bottom: 1px solid #ccc;
}

.lib-info {
    height: 21px;
    display: flex;
    align-items: center;
    justify-content: space-between;
    padding: 0 4px 0 3px;
    border-bottom: 1px solid #bbb;
    font-size: 10px;
}

.mini {
    width: 35px;
    height: 16px;
    padding: 1px 2px;
    border: 1px solid #888;
    background: #fff;
}

.lib-head {
    height: 18px;
    display: flex;
    align-items: center;
    justify-content: space-between;
    padding: 0 5px 0 4px;
    border-bottom: 1px solid #888;
    background: linear-gradient(#fff, #ddd);
    font-size: 10.3px;
}

.lib-head i {
    width: 15px;
    height: 12px;
    border-right: 1px solid #777;
    background: linear-gradient(150deg, transparent 50%, #888 50%) 0 4px / 5px 4px no-repeat, linear-gradient(210deg, transparent 50%, #888 50%) 5px 4px / 5px 4px no-repeat;
}

.lib-list {
    height: 168px;
    background: #eee;
}

.lib-foot {
    height: 14px;
    display: flex;
    align-items: center;
    gap: 3px;
    padding-left: 2px;
    border-bottom: 2px solid #777;
}

.lib-foot .hbar {
    margin: 0 0 0 -2px;
}

.lib-foot .hbar i {
    width: 32px;
}

.tabs.low {
    height: 17px;
    margin-bottom: 2px;
    border-top: 1px solid #bbb;
}

.low .tab {
    line-height: 16px;
}

.low + .low {
    margin-bottom: 0;
    height: 18px;
    box-shadow: 0 -2px #777;
}

.swatches {
    width: 176px;
    height: 100px;
    display: grid;
    grid-template-columns: repeat(21, 1fr);
    grid-template-rows: repeat(12, 1fr);
    background: #000;
}

.swatches i {
    border-right: 1px solid #000;
    border-bottom: 1px solid #000;
}

.gradients {
    width: 59px;
    height: 8px;
    display: grid;
    grid-template-columns: repeat(7, 1fr);
    gap: 1px;
    padding: 0 1px 1px 0;
    background: #000;
}

.gradients i:nth-child(1) { background: linear-gradient(90deg, #fff, #000); }
.gradients i:nth-child(2) { background: radial-gradient(#fff, #222); }
.gradients i:nth-child(3) { background: radial-gradient(#e00, #200); }
.gradients i:nth-child(4) { background: radial-gradient(#0d0, #020); }
.gradients i:nth-child(5) { background: radial-gradient(#00e, #002); }
.gradients i:nth-child(6) { background: linear-gradient(90deg, #48c, #fff 30%, #c80 50%, #ff8); }
.gradients i:nth-child(7) { background: linear-gradient(90deg, #ff0, #0f8, #08f, #f0f); }

/* desktop behind the app */
.desktop {
    flex: 1;
    overflow: hidden;
    padding-top: 30px;
    background: radial-gradient(circle at 27px 20px, #99718c 1px, transparent 1.500px), radial-gradient(circle at 33px 56px, #99718c 1px, transparent 1.500px), radial-gradient(circle at 21px 82px, #a98 1px, transparent 1.500px), radial-gradient(circle at 42px 93px, #b9a 1px, transparent 1.500px), radial-gradient(ellipse 70px 200px at 0 150px, #48003f, transparent), linear-gradient(#1c0018, #30002c 20%, #1c0036 38%, #0c0030 62%, #02000c 85%, #000);
    color: #fff;
    font-size: 11.8px;
    font-weight: 600;
}

.desktop p {
    height: 59.3px;
    line-height: 14px;
    white-space: nowrap;
    letter-spacing: 0.2px;
    text-shadow: 0 1px 2px #000;
}

.pill {
    display: block;
    width: 21px;
    height: 14px;
    padding-left: 1px;
    border-radius: 0 7px 7px 0;
    background: #c6bcc6;
    color: #777;
    line-height: 14px;
    font-size: 11px;
    font-weight: normal;
}

.desktop .first {
    height: 48px;
    margin-top: 45px;
}

.desktop .short {
    height: 70.500px;
}

.cursor {
    position: absolute;
    left: 912px;
    top: 74px;
}
```
